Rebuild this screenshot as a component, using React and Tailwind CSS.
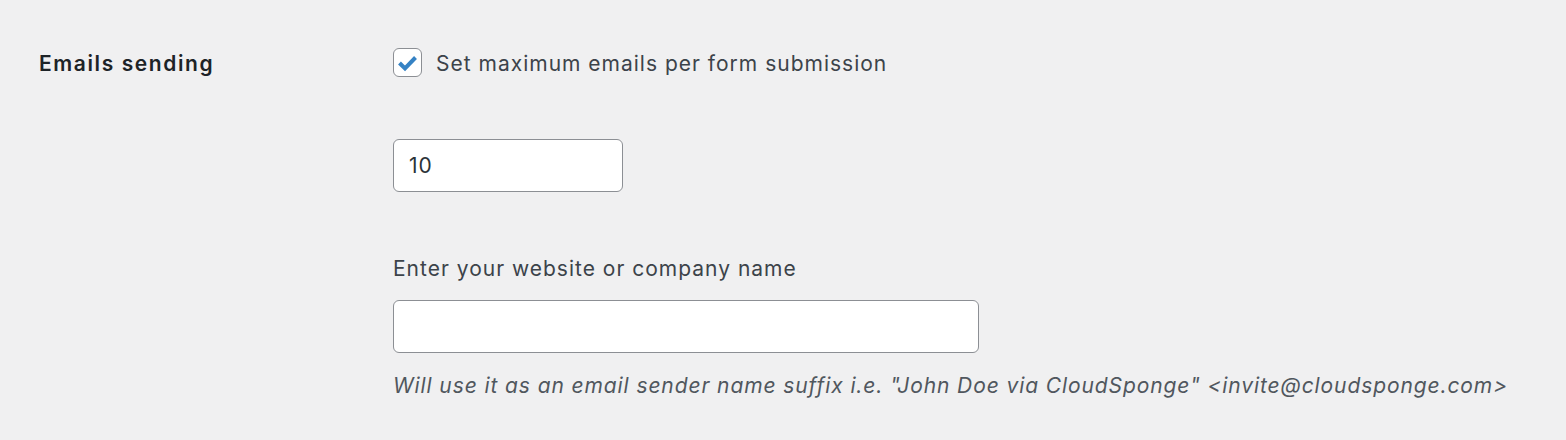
import React, { useState } from 'react';

const EmailsSendingSettings = () => {
  const [limitEnabled, setLimitEnabled] = useState(true);
  const [maxEmails, setMaxEmails] = useState('10');
  const [senderName, setSenderName] = useState('');

  return (
    <div
      className="min-h-[440px] w-full bg-[#f0f0f1] text-[#3c434a]"
      style={{ fontFamily: 'Inter, "Liberation Sans", sans-serif' }}
    >
      <div className="flex pt-[48px] pl-[39px]">
        <div className="w-[354px] shrink-0 pt-[2px] text-[21px] font-semibold leading-[28px] tracking-[1.6px] text-[#1d2327]">
          Emails sending
        </div>

        <div className="flex flex-col">
          <label className="flex h-[28px] items-center gap-[14px] text-[21px] leading-[28px] tracking-[1px]">
            <span className="relative flex h-[29px] w-[29px] shrink-0 items-center justify-center rounded-[6px] border border-[#8c8f94] bg-white">
              <input
                type="checkbox"
                checked={limitEnabled}
                onChange={() => setLimitEnabled(!limitEnabled)}
                className="absolute inset-0 cursor-pointer opacity-0"
              />
              {limitEnabled && (
                <svg width="27" height="27" viewBox="0 0 27 27" aria-hidden="true">
                  <path
                    d="M5.5 14l5.5 5.5L21.5 8.5"
                    fill="none"
                    stroke="#3582c4"
                    strokeWidth="4"
                  />
                </svg>
              )}
            </span>
            <span className="pt-[4px]">Set maximum emails per form submission</span>
          </label>

          <input
            type="text"
            value={maxEmails}
            onChange={e => setMaxEmails(e.target.value)}
            className="mt-[63px] h-[53px] w-[230px] rounded-[6px] border border-[#8c8f94] bg-white px-[15px] text-[21px] tracking-[1px] text-[#2c3338] outline-none"
          />

          <p className="mt-[63px] text-[21px] leading-[28px] tracking-[1px]">Enter your website or company name</p>

          <input
            type="text"
            value={senderName}
            onChange={e => setSenderName(e.target.value)}
            className="mt-[17px] h-[53px] w-[586px] rounded-[6px] border border-[#8c8f94] bg-white px-[15px] text-[21px] outline-none"
          />

          <p className="mt-[19px] whitespace-nowrap text-[21px] italic leading-[28px] tracking-[0.9px] text-[#50575e]">
            Will use it as an email sender name suffix i.e. &quot;John Doe via CloudSponge&quot; &lt;invite@cloudsponge.com&gt;
          </p>
        </div>
      </div>
    </div>
  );
};

export default EmailsSendingSettings;
